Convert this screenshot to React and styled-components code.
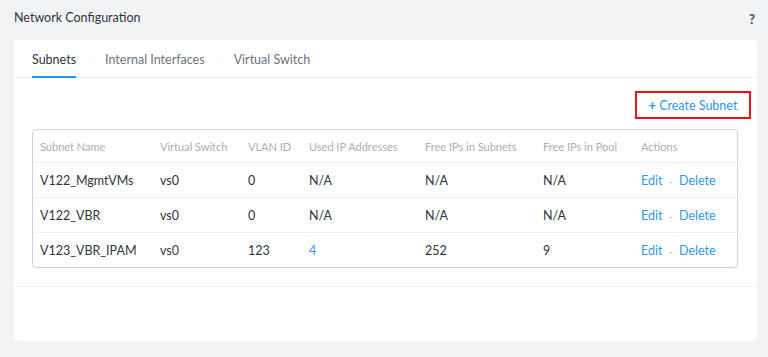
import React from "react";
import styled, { createGlobalStyle } from "styled-components";

const Global = createGlobalStyle`
  html, body { margin: 0; padding: 0; background: #f2f3f5; }
  body { font-family: Lato, "Noto Sans", sans-serif; color: #2f3540; }
`;

const Page = styled.div`
  width: 768px;
  height: 357px;
  box-sizing: border-box;
  padding: 0 11px 16px 14px;
  display: flex;
  flex-direction: column;
`;

const TopBar = styled.div`
  height: 40px;
  display: flex;
  align-items: center;
  justify-content: space-between;
  padding-bottom: 6px;
  box-sizing: border-box;
`;

const Title = styled.div`
  font-size: 12.5px;
  color: #2f3540;
`;

const Help = styled.div`
  font-size: 13px;
  font-weight: 900;
  color: #4d5563;
  margin-right: 2px;
  margin-top: 4px;
`;

const Card = styled.div`
  background: #fff;
  border-radius: 4px;
  width: 743px;
  flex: 1;
  display: flex;
  flex-direction: column;
`;

const Tabs = styled.div`
  height: 37px;
  display: flex;
  align-items: stretch;
  padding-left: 18px;
  border-bottom: 1px solid #eceef1;
`;

const Tab = styled.div`
  display: flex;
  align-items: center;
  font-size: 12.5px;
  color: ${(p) => (p.$active ? "#2f3540" : "#6c7380")};
  border-bottom: 2px solid ${(p) => (p.$active ? "#1b98f5" : "transparent")};
  margin-bottom: -1px;
  padding-top: 2px;
`;

const TabDot = styled.div`
  display: flex;
  align-items: center;
  width: 29px;
  justify-content: center;
  color: #e3e5e8;
  font-size: 8px;
`;

const Body = styled.div`
  padding: 0 19px 0 18px;
  border-bottom: 1px solid #eef0f2;
`;

const Actions = styled.div`
  display: flex;
  justify-content: flex-end;
  padding-top: 13px;
  height: 51px;
  box-sizing: border-box;
  margin-right: -13px;
`;

const CreateButton = styled.button`
  font-family: inherit;
  background: transparent;
  border: 2px solid #ee1111;
  color: #2f97f0;
  font-size: 12.5px;
  height: 28px;
  width: 116px;
  padding: 0 0 0 0;
  display: flex;
  align-items: center;
  justify-content: center;
  gap: 3px;
  cursor: pointer;
`;

const Plus = styled.span`
  font-weight: 900;
  font-size: 13px;
`;

const Table = styled.div`
  border: 1px solid #cfd3d9;
  border-radius: 4px;
  margin-bottom: 18px;
  box-shadow: 0 1px 1px rgba(0, 0, 0, 0.04);
`;

const Row = styled.div`
  display: grid;
  grid-template-columns: 120px 88px 61px 116px 118px 98px 1fr;
  height: ${(p) => (p.$head ? "32px" : "35px")};
  align-items: center;
  border-top: ${(p) => (p.$first ? "none" : "1px solid #eef0f2")};
  box-sizing: border-box;
`;

const Cell = styled.div`
  padding-left: 7px;
  font-size: ${(p) => (p.$head ? "11px" : "12.5px")};
  color: ${(p) => (p.$head ? "#a9aeb7" : p.$link ? "#2f97f0" : "#2f3540")};
  white-space: nowrap;
`;

const Link = styled.span`
  color: #2f97f0;
`;

const Sep = styled.span`
  color: #9aa0a8;
  margin: 0 7px;
  font-size: 10px;
`;

const Footer = styled.div`
  flex: 1;
`;

const headers = [
  "Subnet Name",
  "Virtual Switch",
  "VLAN ID",
  "Used IP Addresses",
  "Free IPs in Subnets",
  "Free IPs in Pool",
  "Actions",
];

const rows = [
  ["V122_MgmtVMs", "vs0", "0", "N/A", "N/A", "N/A"],
  ["V122_VBR", "vs0", "0", "N/A", "N/A", "N/A"],
  ["V123_VBR_IPAM", "vs0", "123", "4", "252", "9"],
];

export default function App() {
  return (
    <>
      <Global />
      <Page>
        <TopBar>
          <Title>Network Configuration</Title>
          <Help>?</Help>
        </TopBar>
        <Card>
          <Tabs>
            <Tab $active>Subnets</Tab>
            <TabDot>·</TabDot>
            <Tab>Internal Interfaces</Tab>
            <TabDot>·</TabDot>
            <Tab>Virtual Switch</Tab>
          </Tabs>
          <Body>
            <Actions>
              <CreateButton>
                <Plus>+</Plus>Create Subnet
              </CreateButton>
            </Actions>
            <Table>
              <Row $head $first>
                {headers.map((h) => (
                  <Cell $head key={h}>
                    {h}
                  </Cell>
                ))}
              </Row>
              {rows.map((r) => (
                <Row key={r[0]}>
                  {r.map((v, i) => (
                    <Cell key={i} $link={i === 3 && v !== "N/A"}>
                      {v}
                    </Cell>
                  ))}
                  <Cell>
                    <Link>Edit</Link>
                    <Sep>·</Sep>
                    <Link>Delete</Link>
                  </Cell>
                </Row>
              ))}
            </Table>
          </Body>
          <Footer />
        </Card>
      </Page>
    </>
  );
}
